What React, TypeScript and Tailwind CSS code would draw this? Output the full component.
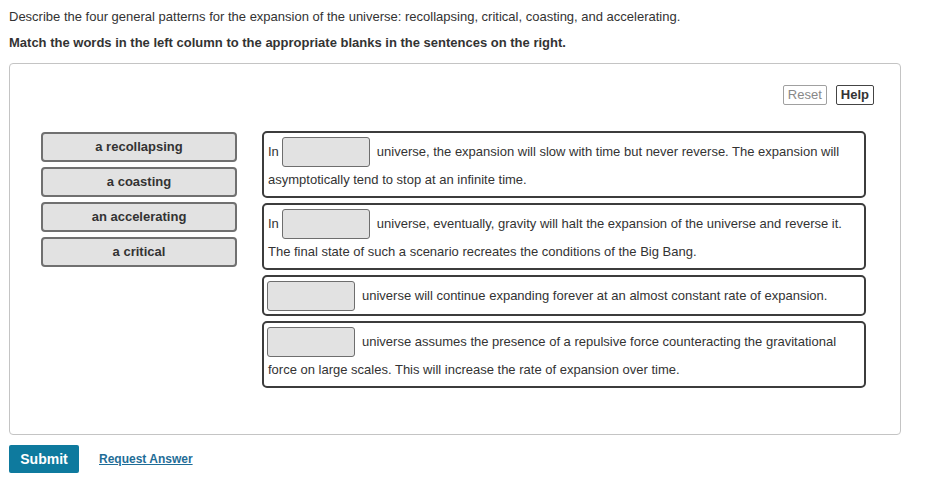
import React from "react";

const font = { fontFamily: '"Liberation Sans", Arial, sans-serif' };

const words = ["a recollapsing", "a coasting", "an accelerating", "a critical"];

function Blank() {
  return (
    <span className="inline-block h-[30px] w-[88px] shrink-0 rounded-[3px] border border-[#6e6e6e] bg-[#e2e2e2]" />
  );
}

type Sentence = { lead?: string; first: string; second?: string };

const sentences: Sentence[] = [
  {
    lead: "In",
    first:
      "universe, the expansion will slow with time but never reverse. The expansion will",
    second: "asymptotically tend to stop at an infinite time.",
  },
  {
    lead: "In",
    first:
      "universe, eventually, gravity will halt the expansion of the universe and reverse it.",
    second:
      "The final state of such a scenario recreates the conditions of the Big Bang.",
  },
  {
    first:
      "universe will continue expanding forever at an almost constant rate of expansion.",
  },
  {
    first:
      "universe assumes the presence of a repulsive force counteracting the gravitational",
    second:
      "force on large scales. This will increase the rate of expansion over time.",
  },
];

function SentenceBox({ s }: { s: Sentence }) {
  return (
    <div className="rounded-[5px] border-2 border-[#3c3c3c] bg-white pl-[3px] pr-[4px] pt-[4px] pb-[3px] text-[13px] text-[#333]">
      <div className="flex h-[30px] items-center whitespace-nowrap">
        {s.lead && <span className="ml-[1px] mr-[3px]">{s.lead}</span>}
        <Blank />
        <span className="ml-[7px]">{s.first}</span>
      </div>
      {s.second && (
        <div className="flex h-[26px] items-center whitespace-nowrap pl-[1px]">
          {s.second}
        </div>
      )}
    </div>
  );
}

export default function App() {
  return (
    <div className="min-h-[479px] w-[928px] bg-white pl-[9px] pt-[9px]" style={font}>
      <p className="text-[13px] leading-[16px] text-[#333]">
        Describe the four general patterns for the expansion of the universe: recollapsing, critical, coasting, and accelerating.
      </p>
      <p className="mt-[10px] text-[13px] font-bold leading-[16px] text-[#333]">
        Match the words in the left column to the appropriate blanks in the sentences on the right.
      </p>

      <div className="mt-[12px] h-[372px] w-[892px] rounded-[4px] border border-[#c4c4c4] pt-[21px]">
        <div className="flex justify-end gap-[9px] pr-[26px]">
          <button className="h-[20px] rounded-[2px] border border-[#a0a0a0] px-[4px] text-[13px] leading-[18px] text-[#888]">
            Reset
          </button>
          <button className="h-[20px] rounded-[2px] border border-[#444] px-[4px] text-[13px] font-bold leading-[18px] text-[#333]">
            Help
          </button>
        </div>

        <div className="mt-[26px] flex gap-[25px] pl-[31px]">
          <div className="mt-[1px] flex w-[196px] flex-col gap-[5px]">
            {words.map((w) => (
              <div
                key={w}
                className="flex h-[30px] items-center justify-center rounded-[4px] border-2 border-[#707070] bg-[#e2e2e2] text-[13px] font-bold text-[#333]"
              >
                {w}
              </div>
            ))}
          </div>
          <div className="flex w-[604px] flex-col gap-[5px]">
            {sentences.map((s, i) => (
              <SentenceBox key={i} s={s} />
            ))}
          </div>
        </div>
      </div>

      <div className="mt-[10px] flex items-center gap-[20px]">
        <button className="h-[28px] w-[70px] rounded-[2px] bg-[#0e7a9e] text-[14px] font-bold text-white">
          Submit
        </button>
        <a href="#" className="text-[12px] font-bold text-[#1f6d97] underline">
          Request Answer
        </a>
      </div>
    </div>
  );
}
